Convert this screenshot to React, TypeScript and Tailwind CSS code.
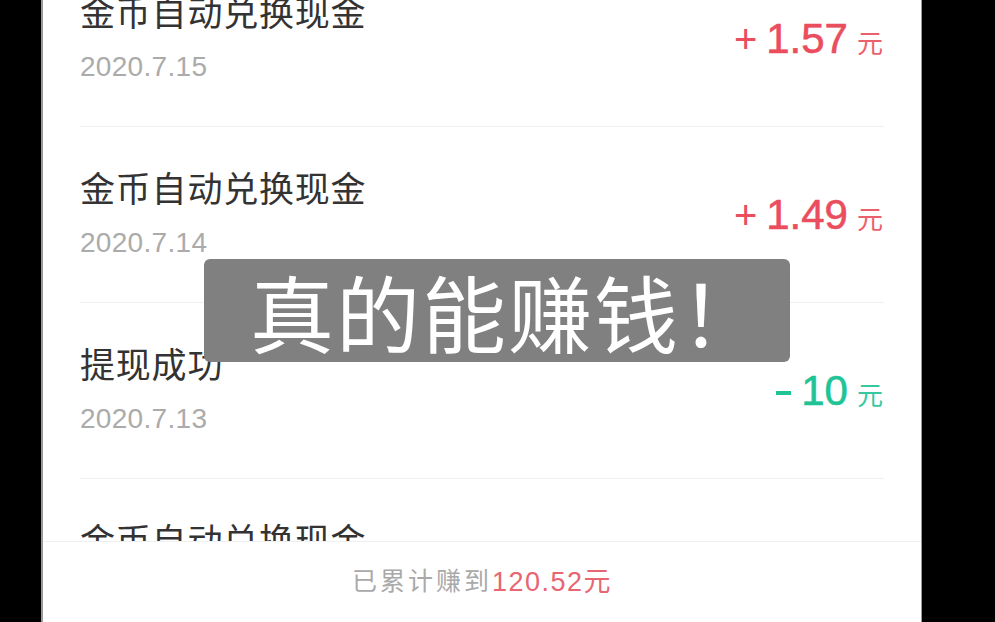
import React from "react";

type Row = {
  title: string;
  date: string;
  sign: string;
  amount: string;
  positive: boolean;
};

const rows: Row[] = [
  { title: "金币自动兑换现金", date: "2020.7.15", sign: "+", amount: "1.57", positive: true },
  { title: "金币自动兑换现金", date: "2020.7.14", sign: "+", amount: "1.49", positive: true },
  { title: "提现成功", date: "2020.7.13", sign: "-", amount: "10", positive: false },
  { title: "金币自动兑换现金", date: "2020.7.12", sign: "+", amount: "1.52", positive: true },
];

const font = { fontFamily: '"Liberation Sans", "Noto Sans CJK SC", sans-serif' };

export default function App() {
  return (
    <div className="w-[995px] h-[622px] bg-black flex overflow-hidden" style={font}>
      <div className="ml-[41px] w-[881px] h-full bg-white border-l-2 border-r border-[#9a9a9a] relative flex flex-col overflow-hidden">
        <div className="flex-1 overflow-hidden">
          <div className="mt-[-49px] pl-[37px] pr-[37px]">
            {rows.map((r, i) => (
              <div
                key={i}
                className="h-[176px] border-b border-[#f0f0f0] flex items-center justify-between"
              >
                <div className="flex flex-col">
                  <div className="text-[35px] leading-[44px] text-[#333333] tracking-[0.8px]">{r.title}</div>
                  <div className="mt-[13px] text-[28px] leading-[36px] text-[#ababab] tracking-[0.3px]">{r.date}</div>
                </div>
                <div
                  className={
                    "flex items-baseline mr-[1px] " +
                    (r.positive ? "text-[#ea4e5e]" : "text-[#1fc496]")
                  }
                >
                  {r.positive ? (
                    <span className="text-[40px] leading-none mr-[9px]">+</span>
                  ) : (
                    <span className="inline-block w-[15px] h-[4px] bg-current mr-[10px] self-center translate-y-[2px]" />
                  )}
                  <span className="text-[42px] leading-none [-webkit-text-stroke:0.6px_currentColor]">{r.amount}</span>
                  <span className="text-[26px] leading-none ml-[9px] opacity-90">元</span>
                </div>
              </div>
            ))}
          </div>
        </div>
        <div className="h-[81px] shrink-0 border-t border-[#efefef] bg-white flex items-center justify-center">
          <span className="text-[25px] tracking-[3px] text-[#a9a9a9]">已累计赚到</span>
          <span className="text-[27px] tracking-[1.5px] text-[#e86572]">120.52元</span>
        </div>
        <div className="absolute left-[161px] top-[259px] w-[586px] h-[103px] rounded-[6px] bg-[#808080] flex items-center justify-start pl-[46px]">
          <span
            className="text-[84px] leading-none text-white tracking-[2px]"
            style={{ fontFamily: '"Noto Sans CJK SC", sans-serif' }}
          >
            真的能赚钱！
          </span>
        </div>
      </div>
    </div>
  );
}
